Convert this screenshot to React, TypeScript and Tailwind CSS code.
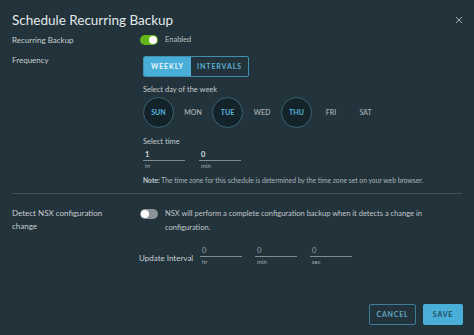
import React from "react";

const days = [
  { label: "SUN", on: true },
  { label: "MON", on: false },
  { label: "TUE", on: true },
  { label: "WED", on: false },
  { label: "THU", on: true },
  { label: "FRI", on: false },
  { label: "SAT", on: false },
];

function Toggle({ on }: { on: boolean }) {
  return (
    <div
      className={`relative w-[18px] h-[10px] rounded-full ${on ? "bg-[#62b516]" : "bg-[#8a9297]"}`}
    >
      <div
        className={`absolute top-[1px] w-[8px] h-[8px] rounded-full bg-white ${on ? "right-[1px]" : "left-[1px]"}`}
      />
    </div>
  );
}

function TimeField({ value, unit, dim }: { value: string; unit: string; dim?: boolean }) {
  return (
    <div className="w-[42px]">
      <div
        className={`h-[11px] border-b border-[#7d8b92] pl-[2px] text-[7.5px] leading-[10px] ${dim ? "text-[#9aa4a9]" : "text-[#e3e7e9] font-semibold"}`}
      >
        {value}
      </div>
      <div className="mt-[1px] pl-[2px] text-[6px] leading-[8px] text-[#a7b0b5]">{unit}</div>
    </div>
  );
}

export default function App() {
  return (
    <div
      className="h-screen w-full bg-[#22333b] flex flex-col px-[12px] overflow-hidden"
      style={{ fontFamily: "Lato, 'Liberation Sans', sans-serif" }}
    >
      {/* Header */}
      <div className="mt-[12px] h-[16px] flex items-center justify-between">
        <h1 className="text-[13.5px] leading-[16px] text-[#e6e9ea]">Schedule Recurring Backup</h1>
        <svg width="8" height="8" viewBox="0 0 8 8" className="mr-[-1px]">
          <path d="M1 1L7 7M7 1L1 7" stroke="#9ea8ad" strokeWidth="1" />
        </svg>
      </div>

      {/* Recurring backup */}
      <div className="mt-[6px] h-[12px] flex items-center">
        <div className="w-[128px] text-[8px] text-[#c9cfd2]">Recurring Backup</div>
        <Toggle on />
        <span className="ml-[7px] text-[7.5px] text-[#b9c1c5]">Enabled</span>
      </div>

      {/* Frequency */}
      <div className="mt-[10px] flex items-start">
        <div className="w-[131px] text-[8px] leading-[8px] text-[#c9cfd2]">Frequency</div>
        <div className="flex flex-col">
          <div className="flex h-[21px] w-[106px] rounded-[2px] border border-[#3f8fad] overflow-hidden">
            <div className="w-[47px] bg-[#49afd9] flex items-center justify-center text-[7px] font-bold tracking-[0.9px] text-[#e9f6fb]">
              WEEKLY
            </div>
            <div className="flex-1 flex items-center justify-center text-[7px] font-bold tracking-[0.9px] text-[#5fb2d4]">
              INTERVALS
            </div>
          </div>

          <div className="mt-[8px] text-[7.5px] leading-[10px] text-[#c3cacd]">Select day of the week</div>
          <div className="mt-[2px] flex gap-[3.5px]">
            {days.map((d) =>
              d.on ? (
                <div
                  key={d.label}
                  className="w-[31px] h-[31px] rounded-full bg-[#14232a] border border-[#3c6273] flex items-center justify-center text-[7px] font-bold text-[#56b5dc]"
                >
                  {d.label}
                </div>
              ) : (
                <div
                  key={d.label}
                  className="w-[31px] h-[31px] flex items-center justify-center text-[7px] font-semibold text-[#a4adb2]"
                >
                  {d.label}
                </div>
              )
            )}
          </div>

          <div className="mt-[9px] text-[7.5px] leading-[10px] text-[#c3cacd]">Select time</div>
          <div className="mt-[3px] flex gap-[14px]">
            <TimeField value="1" unit="hr" />
            <TimeField value="0" unit="min" />
          </div>
          <div className="mt-[5px] text-[6.75px] leading-[10px] text-[#aab3b7] whitespace-nowrap">
            <span className="font-bold text-[#c3cacd]">Note:</span> The time zone for this schedule is determined by
            the time zone set on your web browser.
          </div>
        </div>
      </div>

      <div className="mt-[8px] h-[1px] bg-[#3d5059]" />

      {/* Detect NSX */}
      <div className="mt-[13px] flex items-start">
        <div className="w-[128px] text-[8px] leading-[13px] text-[#c9cfd2]">
          Detect NSX configuration
          <br />
          change
        </div>
        <div className="mt-[2px]">
          <Toggle on={false} />
        </div>
        <div className="ml-[7px] w-[290px] text-[7.5px] leading-[14px] text-[#c0c7cb]">
          NSX will perform a complete configuration backup when it detects a change in configuration.
        </div>
      </div>

      {/* Update interval */}
      <div className="mt-[11px] flex items-start pl-[127px]">
        <div className="mt-[7px] w-[61px] text-[8px] leading-[10px] text-[#c9cfd2] whitespace-nowrap">Update Interval</div>
        <div className="flex gap-[13px]">
          <TimeField value="0" unit="hr" dim />
          <TimeField value="0" unit="min" dim />
          <TimeField value="0" unit="sec" dim />
        </div>
      </div>

      {/* Footer */}
      <div className="mt-auto mb-[10px] flex justify-end gap-[7px] mr-[-1px]">
        <button className="h-[21px] w-[47px] rounded-[2px] border border-[#3d7f98] text-[7px] font-bold tracking-[0.8px] text-[#63a9c6]">
          CANCEL
        </button>
        <button className="h-[21px] w-[40px] rounded-[2px] bg-[#49afd9] text-[7px] font-bold tracking-[0.8px] text-[#1f4d62]">
          SAVE
        </button>
      </div>
    </div>
  );
}
